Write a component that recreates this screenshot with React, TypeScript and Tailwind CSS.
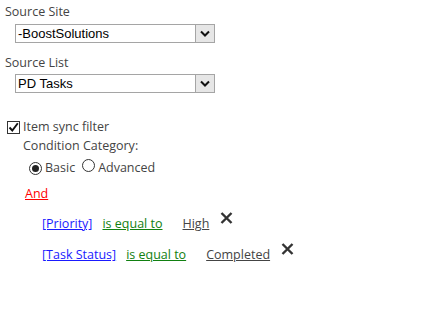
import React from "react"

const font = { fontFamily: '"Open Sans", "Noto Sans", sans-serif' }

function FakeSelect({ value }: { value: string }) {
  return (
    <div className="ml-[15px] flex h-[19px] w-[200px] items-stretch border border-[#a5a5a5] bg-white">
      <div className="flex-1 pl-[2px] text-[13px] leading-[17px] text-black" style={{ fontFamily: '"Liberation Sans", Arial, sans-serif' }}>
        {value}
      </div>
      <div className="flex w-[19px] items-center justify-center border-l border-[#a5a5a5] bg-[#e6e6e6]">
        <svg width="10" height="7" viewBox="0 0 10 7">
          <path d="M1 1.5 L5 5.5 L9 1.5" fill="none" stroke="#111" strokeWidth="2" />
        </svg>
      </div>
    </div>
  )
}

function CloseX() {
  return (
    <svg width="13" height="12" viewBox="0 0 13 12" className="ml-[11px] self-start mt-[-3px]">
      <path d="M1.5 1 L11.5 11 M11.5 1 L1.5 11" stroke="#333" strokeWidth="2.4" />
    </svg>
  )
}

function Radio({ checked }: { checked?: boolean }) {
  return (
    <span className="inline-flex h-[13px] w-[13px] items-center justify-center rounded-full border border-[#333] bg-white">
      {checked && <span className="h-[7px] w-[7px] rounded-full bg-[#222]" />}
    </span>
  )
}

export default function App() {
  return (
    <div className="h-[316px] w-[430px] bg-white text-[12.5px] text-[#444]" style={font}>
      <div className="pl-[5px] pt-[3px] leading-[18px]">Source Site</div>
      <div className="mt-[3px]">
        <FakeSelect value="-BoostSolutions" />
      </div>
      <div className="mt-[11px] pl-[5px] leading-[18px]">Source List</div>
      <div className="mt-[2px]">
        <FakeSelect value="PD Tasks" />
      </div>

      <div className="mt-[25px] flex items-center pl-[7px] leading-[18px]">
        <span className="flex h-[13px] w-[13px] items-center justify-center border border-[#333] bg-white">
          <svg width="11" height="11" viewBox="0 0 11 11">
            <path d="M1.5 5.5 L4.3 8.5 L9.8 1.2" fill="none" stroke="#111" strokeWidth="1.9" />
          </svg>
        </span>
        <span className="ml-[3px]">Item sync filter</span>
      </div>
      <div className="mt-[1px] pl-[23px] leading-[18px]">Condition Category:</div>
      <div className="mt-[4px] flex items-center pl-[29px] leading-[18px]">
        <Radio checked />
        <span className="ml-[3px]">Basic</span>
        <span className="ml-[7px]"><Radio /></span>
        <span className="ml-[3px]">Advanced</span>
      </div>
      <div className="mt-[8px] pl-[25px] leading-[18px]">
        <span className="text-[#ff0000] underline">And</span>
      </div>

      <div className="mt-[12px] flex items-center pl-[42px] leading-[18px]">
        <span className="text-[#1a1aff] underline">[Priority]</span>
        <span className="ml-[10px] text-[#118011] underline">is equal to</span>
        <span className="ml-[20px] text-[#444] underline">High</span>
        <CloseX />
      </div>
      <div className="mt-[13px] flex items-center pl-[42px] leading-[18px]">
        <span className="text-[#1a1aff] underline">[Task Status]</span>
        <span className="ml-[10px] text-[#118011] underline">is equal to</span>
        <span className="ml-[20px] text-[#444] underline">Completed</span>
        <CloseX />
      </div>
    </div>
  )
}
